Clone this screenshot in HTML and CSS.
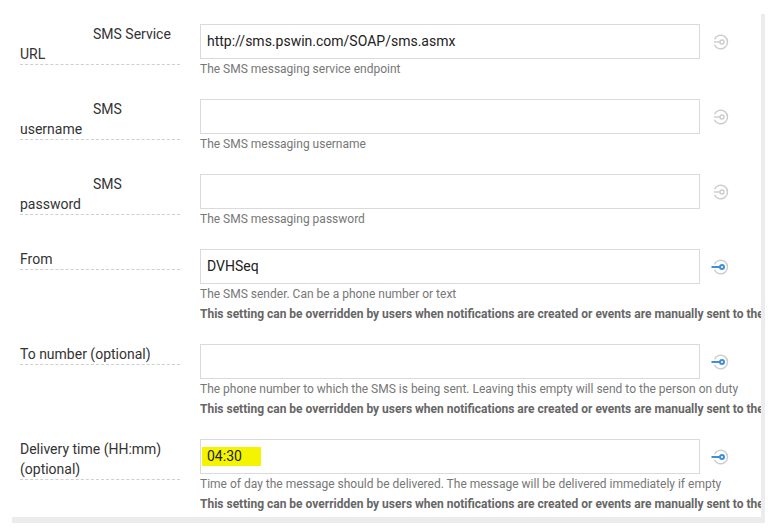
FILE: index.html
```html
<!DOCTYPE html>
<html>
<head>
<meta charset="utf-8">
<link rel="stylesheet" href="styles.css">
</head>
<body>
<div class="card">
  <div class="row">
    <div class="label indent">SMS Service URL</div>
    <div class="field">
      <div class="control">
        <div class="input">http://sms.pswin.com/SOAP/sms.asmx</div>
        <svg class="ovr" viewBox="0 0 18 18"><path class="arc off" d="M3.5 6.3 A6.8 6.8 0 1 1 3.5 11.7"/><path class="stem off" d="M3 9 H9"/><circle class="dot off" cx="11" cy="9" r="2"/></svg>
      </div>
      <div class="help">The SMS messaging service endpoint</div>
    </div>
  </div>
  <div class="row">
    <div class="label indent">SMS username</div>
    <div class="field">
      <div class="control">
        <div class="input"></div>
        <svg class="ovr" viewBox="0 0 18 18"><path class="arc off" d="M3.5 6.3 A6.8 6.8 0 1 1 3.5 11.7"/><path class="stem off" d="M3 9 H9"/><circle class="dot off" cx="11" cy="9" r="2"/></svg>
      </div>
      <div class="help">The SMS messaging username</div>
    </div>
  </div>
  <div class="row">
    <div class="label indent">SMS password</div>
    <div class="field">
      <div class="control">
        <div class="input"></div>
        <svg class="ovr" viewBox="0 0 18 18"><path class="arc off" d="M3.5 6.3 A6.8 6.8 0 1 1 3.5 11.7"/><path class="stem off" d="M3 9 H9"/><circle class="dot off" cx="11" cy="9" r="2"/></svg>
      </div>
      <div class="help">The SMS messaging password</div>
    </div>
  </div>
  <div class="row">
    <div class="label">From</div>
    <div class="field">
      <div class="control">
        <div class="input">DVHSeq</div>
        <svg class="ovr" viewBox="0 0 18 18"><path class="arc" d="M3.5 6.3 A6.8 6.8 0 1 1 3.5 11.7"/><path class="stem on" d="M0.5 9 H9"/><circle class="dot on" cx="11" cy="9" r="2"/></svg>
      </div>
      <div class="help">The SMS sender. Can be a phone number or text</div>
      <div class="note">This setting can be overridden by users when notifications are created or events are manually sent to the person on duty</div>
    </div>
  </div>
  <div class="row">
    <div class="label">To number (optional)</div>
    <div class="field">
      <div class="control">
        <div class="input"></div>
        <svg class="ovr" viewBox="0 0 18 18"><path class="arc" d="M3.5 6.3 A6.8 6.8 0 1 1 3.5 11.7"/><path class="stem on" d="M0.5 9 H9"/><circle class="dot on" cx="11" cy="9" r="2"/></svg>
      </div>
      <div class="help">The phone number to which the SMS is being sent. Leaving this empty will send to the person on duty</div>
      <div class="note">This setting can be overridden by users when notifications are created or events are manually sent to the person on duty</div>
    </div>
  </div>
  <div class="row">
    <div class="label">Delivery time (HH:mm) (optional)</div>
    <div class="field">
      <div class="control">
        <div class="input"><span class="mark">04:30</span></div>
        <svg class="ovr" viewBox="0 0 18 18"><path class="arc" d="M3.5 6.3 A6.8 6.8 0 1 1 3.5 11.7"/><path class="stem on" d="M0.5 9 H9"/><circle class="dot on" cx="11" cy="9" r="2"/></svg>
      </div>
      <div class="help">Time of day the message should be delivered. The message will be delivered immediately if empty</div>
      <div class="note">This setting can be overridden by users when notifications are created or events are manually sent to the person on duty</div>
    </div>
  </div>
</div>
</body>
</html>
```
FILE: styles.css
```css
html, body {
  margin: 0;
  padding: 0;
  background: #fff;
}
body {
  font-family: Roboto, "Liberation Sans", Arial, sans-serif;
  color: #333;
  padding: 14px 0 0 12px;
}
.card {
  width: 753px;
  box-sizing: border-box;
  background: #fff;
  border-right: 4px solid #ececec;
  border-bottom: 6px solid #ececec;
  padding: 10px 0 0 8px;
  overflow: hidden;
}
.row {
  display: flex;
  align-items: flex-start;
  margin-bottom: 20px;
}
.row:last-child {
  margin-bottom: 3px;
}
.label {
  width: 160px;
  flex: none;
  font-size: 14px;
  line-height: 20px;
  color: #333;
  border-bottom: 1px dashed #cfcfcf;
  margin-right: 20px;
}
.indent {
  text-indent: 73px;
}
.field {
  flex: 1;
  min-width: 0;
}
.control {
  display: flex;
  align-items: center;
}
.input {
  width: 500px;
  height: 35px;
  box-sizing: border-box;
  border: 1px solid #dadada;
  font-size: 14px;
  line-height: 33px;
  padding: 0 6px;
  color: #222;
  flex: none;
}
.mark {
  display: inline-block;
  background: #f4f400;
  line-height: 19px;
  margin-left: -5px;
  padding: 0 19px 0 5px;
  vertical-align: middle;
  position: relative;
  top: -1px;
}
.ovr {
  width: 18px;
  height: 18px;
  margin-left: 11px;
  flex: none;
  fill: none;
}
.arc {
  stroke: #cccccc;
  stroke-width: 1.4;
}
.stem.off, .dot.off {
  stroke: #cccccc;
  stroke-width: 1.4;
}
.stem.on, .dot.on {
  stroke: #3f8fd6;
  stroke-width: 2;
}
.dot {
  fill: #fff;
}
.help {
  font-size: 12px;
  line-height: 20px;
  color: #777;
  white-space: nowrap;
}
.note {
  font-size: 12px;
  line-height: 20px;
  font-weight: bold;
  color: #666;
  white-space: nowrap;
}
```
